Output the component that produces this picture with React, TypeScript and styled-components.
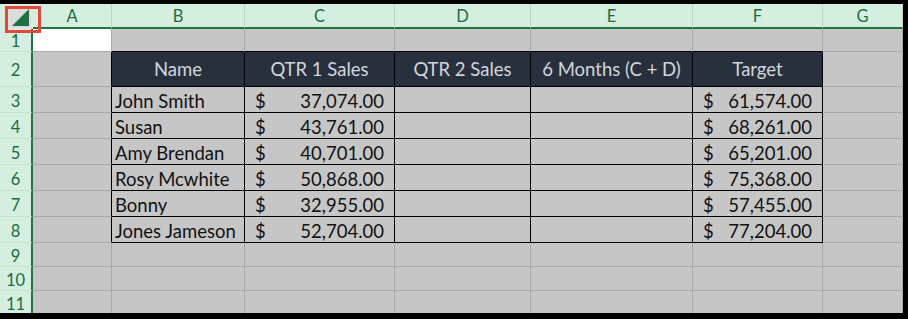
import React from 'react';
import styled, { createGlobalStyle } from 'styled-components';

interface Person {
  name: string;
  qtr1: string;
  target: string;
}

const people: Person[] = [
  { name: 'John Smith', qtr1: '37,074.00', target: '61,574.00' },
  { name: 'Susan', qtr1: '43,761.00', target: '68,261.00' },
  { name: 'Amy Brendan', qtr1: '40,701.00', target: '65,201.00' },
  { name: 'Rosy Mcwhite', qtr1: '50,868.00', target: '75,368.00' },
  { name: 'Bonny', qtr1: '32,955.00', target: '57,455.00' },
  { name: 'Jones Jameson', qtr1: '52,704.00', target: '77,204.00' },
];

const COLS = ['A', 'B', 'C', 'D', 'E', 'F', 'G'];
const COL_WIDTHS = [79, 133, 150, 136, 162, 130, 80];
const ROW_HEIGHTS = [23, 35, 26, 26, 26, 26, 26, 26, 24, 24, 24];
const HEADINGS = ['Name', 'QTR 1 Sales', 'QTR 2 Sales', '6 Months (C + D)', 'Target'];

const GREEN = '#217346';
const GRID = '#a9a9a9';
const INK = '#000';

const GlobalStyle = createGlobalStyle`
  html, body {
    margin: 0;
    padding: 0;
    background: #000;
  }
  * {
    box-sizing: border-box;
  }
`;

const Frame = styled.div`
  position: relative;
  width: 908px;
  height: 319px;
  padding: 4px 5px 6px 0;
  background: #000;
  overflow: hidden;
`;

const Sheet = styled.div`
  display: grid;
  grid-template-columns: 33px ${COL_WIDTHS.map(w => `${w}px`).join(' ')};
  grid-template-rows: 25px ${ROW_HEIGHTS.map(h => `${h}px`).join(' ')};
  height: 100%;
  overflow: hidden;
  background: #c6c6c6;
  font-family: Lato, 'Open Sans', sans-serif;
`;

const Corner = styled.div`
  background: #d4efe0;
  padding: 3px 2px 2px 8px;
`;

const CornerButton = styled.div`
  width: 23px;
  height: 21px;
  background: #dcdcdc;
  display: flex;
  align-items: flex-end;
  justify-content: flex-end;
  padding: 0 2px 2px 0;

  svg {
    display: block;
  }
`;

const ColHead = styled.div`
  display: flex;
  align-items: center;
  justify-content: center;
  background: #d4efe0;
  color: #1d6b43;
  font-size: 16.5px;
  border-right: 1px solid #b8d8c4;
  border-bottom: 2px solid ${GREEN};
`;

const RowHead = styled.div`
  display: flex;
  align-items: center;
  justify-content: center;
  padding-top: 2px;
  background: #d4efe0;
  color: #1d6b43;
  font-size: 16.5px;
  border-right: 2px solid ${GREEN};
  border-bottom: 1px solid #c3e2cf;
`;

const Cell = styled.div<{ $bg?: string; $right?: string; $bottom?: string }>`
  display: flex;
  align-items: center;
  padding: 2px 4px 0 3px;
  background: ${p => p.$bg || '#c6c6c6'};
  border-right: 1px solid ${p => p.$right || GRID};
  border-bottom: 1px solid ${p => p.$bottom || GRID};
  color: #111;
  font-size: 18.5px;
  white-space: nowrap;
  overflow: hidden;
`;

const HeadCell = styled(Cell)`
  justify-content: center;
  padding: 0;
  color: #d2d6dc;
`;

const MoneyCell = styled(Cell)`
  justify-content: space-between;
  padding: 2px 10px 0 10px;
`;

const Highlight = styled.div`
  position: absolute;
  left: 5px;
  top: 6px;
  width: 36px;
  height: 27px;
  border: 3px solid #e5473b;
  pointer-events: none;
`;

const inTableCol = (c: number) => c >= 1 && c <= 5;

const App = () => {
  const rows: React.ReactNode[] = [];

  ROW_HEIGHTS.forEach((_, i) => {
    const r = i + 1;
    rows.push(<RowHead key={`rh${r}`}>{r}</RowHead>);

    COLS.forEach((col, c) => {
      const key = `${col}${r}`;
      const inTableRow = r >= 2 && r <= 8;
      const right = inTableRow && (c === 0 || inTableCol(c)) ? INK : GRID;
      const bottom = inTableCol(c) && r >= 1 && r <= 8 ? INK : GRID;

      if (r === 1 && c === 0) {
        rows.push(<Cell key={key} $bg="#fff" $right={right} $bottom={bottom} />);
        return;
      }

      if (r === 2 && inTableCol(c)) {
        rows.push(
          <HeadCell key={key} $bg="#29303d" $right={right} $bottom={bottom}>
            {HEADINGS[c - 1]}
          </HeadCell>
        );
        return;
      }

      if (r >= 3 && r <= 8 && inTableCol(c)) {
        const person = people[r - 3];
        if (c === 1) {
          rows.push(<Cell key={key} $right={right} $bottom={bottom}>{person.name}</Cell>);
        } else if (c === 2 || c === 5) {
          rows.push(
            <MoneyCell key={key} $right={right} $bottom={bottom}>
              <span>$</span>
              <span>{c === 2 ? person.qtr1 : person.target}</span>
            </MoneyCell>
          );
        } else {
          rows.push(<Cell key={key} $right={right} $bottom={bottom} />);
        }
        return;
      }

      rows.push(<Cell key={key} $right={right} $bottom={bottom} />);
    });
  });

  return (
    <>
      <GlobalStyle />
      <Frame>
        <Sheet>
          <Corner>
            <CornerButton>
              <svg width="17" height="17" viewBox="0 0 17 17">
                <polygon points="0,17 17,17 17,0" fill="#1f6e44" />
              </svg>
            </CornerButton>
          </Corner>
          {COLS.map(col => (
            <ColHead key={col}>{col}</ColHead>
          ))}
          {rows}
        </Sheet>
        <Highlight />
      </Frame>
    </>
  );
};

export default App;
